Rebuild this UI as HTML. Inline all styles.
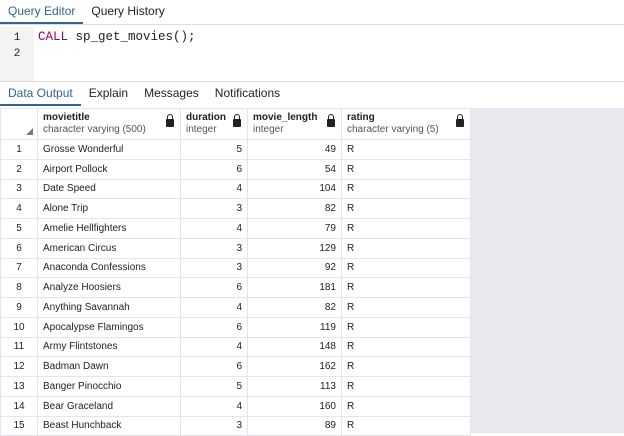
<!DOCTYPE html>
<html><head><style>
*{margin:0;padding:0;box-sizing:border-box}
body{width:624px;height:433px;overflow:hidden;background:#fff;font-family:"Liberation Sans",sans-serif;color:#222;position:relative}
.tabs{position:absolute;left:0;height:24px;display:flex;font-size:12px}
.tabs div{padding:0 8px;line-height:23px;color:#222}
.tabs .a{color:#326690;border-bottom:2px solid #326690}
.gut{position:absolute;left:0;top:27px;width:34px;height:54px;background:#f3f3f3;font-family:"Liberation Mono",monospace;font-size:11px;text-align:center;line-height:16px;padding-top:3px}
.code{position:absolute;left:38px;top:30px;font-family:"Liberation Mono",monospace;font-size:12.5px;color:#222}
.code b{color:#990066;font-weight:normal}
.grid{position:absolute;left:0;top:108px;width:624px;height:325px;background:#e9e9ef}
table{border-collapse:collapse;font-size:10px;table-layout:fixed;background:#fff}
td{border:1px solid #e4e4ea;height:19.75px;padding:0 5px;white-space:nowrap;overflow:hidden}
th{border:1px solid #e4e4ea;height:31px;text-align:left;font-weight:bold;font-size:10px;padding:0 5px;position:relative;vertical-align:middle;line-height:12px}
th span{font-weight:normal;color:#555}
th i{position:absolute;right:6px;top:10px;width:8px;height:8px;background:#222;border-radius:1px}
th i:before{content:"";position:absolute;left:1px;top:-5px;width:4px;height:5px;border:1px solid #222;border-bottom:none;border-radius:3px 3px 0 0}
td.n{text-align:center}
td.r{text-align:right}
</style></head><body>
<div class="tabs" style="top:0"><div class="a">Query Editor</div><div>Query History</div></div>
<div style="position:absolute;top:24px;left:0;width:624px;height:1px;background:#ddd"></div>
<div class="gut">1<br>2</div>
<div class="code"><b>CALL</b> sp_get_movies();</div>
<div style="position:absolute;top:81px;left:0;width:624px;height:1px;background:#ddd"></div>
<div class="tabs" style="top:82px"><div class="a">Data Output</div><div>Explain</div><div>Messages</div><div>Notifications</div></div>
<div class="grid">
<table style="width:470px">
<colgroup><col style="width:37px"><col style="width:143px"><col style="width:67px"><col style="width:94px"><col style="width:129px"></colgroup>
<tr><th style="background:#fff"><span style="position:absolute;right:4px;bottom:4px;width:0;height:0;border-left:7px solid transparent;border-bottom:7px solid #777"></span></th><th>movietitle<br><span>character varying (500)</span><i></i></th><th>duration<br><span>integer</span><i></i></th><th>movie_length<br><span>integer</span><i></i></th><th>rating<br><span>character varying (5)</span><i></i></th></tr>
<tr><td class="n">1</td><td>Grosse Wonderful</td><td class="r">5</td><td class="r">49</td><td>R</td></tr>
<tr><td class="n">2</td><td>Airport Pollock</td><td class="r">6</td><td class="r">54</td><td>R</td></tr>
<tr><td class="n">3</td><td>Date Speed</td><td class="r">4</td><td class="r">104</td><td>R</td></tr>
<tr><td class="n">4</td><td>Alone Trip</td><td class="r">3</td><td class="r">82</td><td>R</td></tr>
<tr><td class="n">5</td><td>Amelie Hellfighters</td><td class="r">4</td><td class="r">79</td><td>R</td></tr>
<tr><td class="n">6</td><td>American Circus</td><td class="r">3</td><td class="r">129</td><td>R</td></tr>
<tr><td class="n">7</td><td>Anaconda Confessions</td><td class="r">3</td><td class="r">92</td><td>R</td></tr>
<tr><td class="n">8</td><td>Analyze Hoosiers</td><td class="r">6</td><td class="r">181</td><td>R</td></tr>
<tr><td class="n">9</td><td>Anything Savannah</td><td class="r">4</td><td class="r">82</td><td>R</td></tr>
<tr><td class="n">10</td><td>Apocalypse Flamingos</td><td class="r">6</td><td class="r">119</td><td>R</td></tr>
<tr><td class="n">11</td><td>Army Flintstones</td><td class="r">4</td><td class="r">148</td><td>R</td></tr>
<tr><td class="n">12</td><td>Badman Dawn</td><td class="r">6</td><td class="r">162</td><td>R</td></tr>
<tr><td class="n">13</td><td>Banger Pinocchio</td><td class="r">5</td><td class="r">113</td><td>R</td></tr>
<tr><td class="n">14</td><td>Bear Graceland</td><td class="r">4</td><td class="r">160</td><td>R</td></tr>
<tr><td class="n">15</td><td>Beast Hunchback</td><td class="r">3</td><td class="r">89</td><td>R</td></tr>
</table>
</div>
</body></html>
